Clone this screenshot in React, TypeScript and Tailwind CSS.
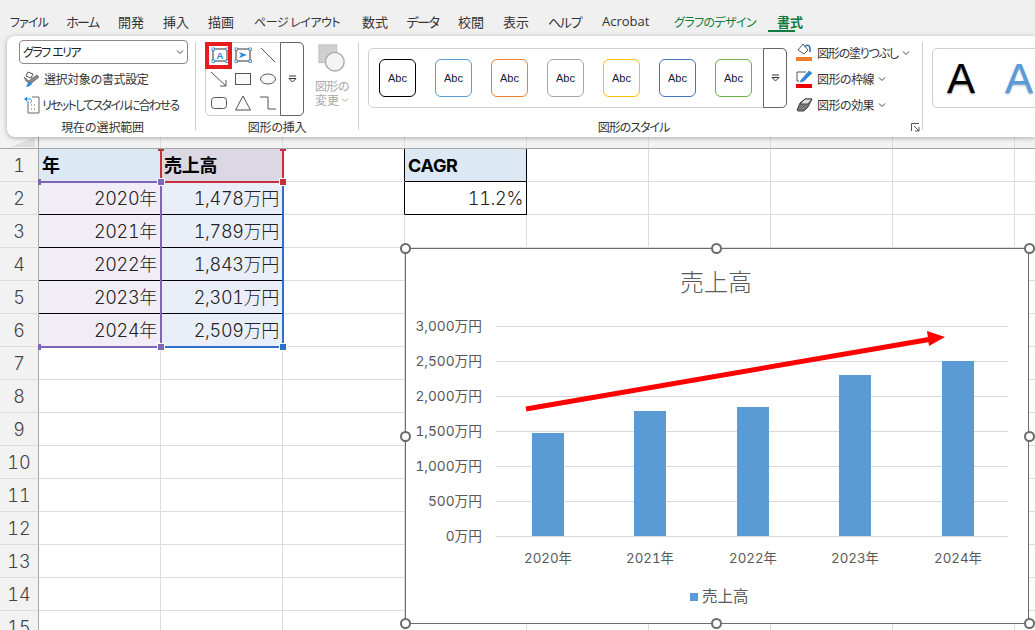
import type { ReactNode } from 'react'

const JP = "font-['Noto_Sans_CJK_JP','Noto_Sans',sans-serif]"
const CELL_FONT = "font-['Inter','Noto_Sans_CJK_JP',sans-serif] tabular-nums"

const TABS = [
  { label: 'ファイル', cls: "w-[56px] text-[12px] tracking-[-0.9px] [font-feature-settings:'palt']" },
  { label: 'ホーム', cls: 'w-[52px] tracking-[-2px]' },
  { label: '開発', cls: 'w-[45px]' },
  { label: '挿入', cls: 'w-[45px]' },
  { label: '描画', cls: 'w-[46px]' },
  { label: 'ページ レイアウト', cls: "w-[108px] text-[12px] tracking-[-0.5px] [font-feature-settings:'palt']" },
  { label: '数式', cls: 'w-[44px]' },
  { label: 'データ', cls: 'w-[52px] tracking-[-2px]' },
  { label: '校閲', cls: 'w-[45px]' },
  { label: '表示', cls: 'w-[45px]' },
  { label: 'ヘルプ', cls: 'w-[54px] tracking-[-2px]' },
  { label: 'Acrobat', cls: "w-[72px] font-['Open_Sans',sans-serif] text-[13px]" },
  { label: 'グラフのデザイン', cls: "w-[103px] text-[12px] tracking-[-0.6px] text-[#107c41] [font-feature-settings:'palt']" },
]

const ABC = [
  'border-black',
  'border-[#5b9bd5]',
  'border-[#ed7d31]',
  'border-[#a5a5a5]',
  'border-[#ffc000]',
  'border-[#4472c4]',
  'border-[#70ad47]',
]

const COLUMNS = ['A', 'B', 'C', 'D', 'E', 'F', 'G', 'H', 'I']
const ROWS = [1, 2, 3, 4, 5, 6, 7, 8, 9, 10, 11, 12, 13, 14, 15]

const SALES = [
  { year: '2020年', label: '1,478万円', x: 532, y: 433, h: 103 },
  { year: '2021年', label: '1,789万円', x: 634, y: 411, h: 125 },
  { year: '2022年', label: '1,843万円', x: 737, y: 407, h: 129 },
  { year: '2023年', label: '2,301万円', x: 839, y: 375, h: 161 },
  { year: '2024年', label: '2,509万円', x: 942, y: 361, h: 175 },
]

const Y_LABELS = ['3,000万円', '2,500万円', '2,000万円', '1,500万円', '1,000万円', '500万円', '0万円']

function Chevron({ className = 'text-[#444]' }: { className?: string }) {
  return (
    <svg width="8" height="6" viewBox="0 0 8 6" className={`shrink-0 ${className}`}>
      <path d="M1 1.5 L4 4.5 L7 1.5" fill="none" stroke="currentColor" strokeWidth="1" />
    </svg>
  )
}

function MoreButton({ className }: { className: string }) {
  return (
    <div className={`flex w-[24px] items-center justify-center border border-[#666] rounded-r-[5px] ${className}`}>
      <svg width="9" height="8" viewBox="0 0 9 8">
        <path d="M1 1 H8" stroke="#333" strokeWidth="1" />
        <path d="M1 3.5 L4.5 7 L8 3.5 Z" fill="none" stroke="#333" strokeWidth="1" />
      </svg>
    </div>
  )
}

function Sep({ className }: { className: string }) {
  return <div className={`h-[88px] w-px bg-[#d0d0d0] ${className}`} />
}

function GroupLabel({ children, className = '' }: { children: ReactNode; className?: string }) {
  return <div className={`h-[18px] text-center text-[12px] leading-[18px] text-[#333] ${className}`}>{children}</div>
}

function TextBoxIcon({ glyph }: { glyph: 'A' | 'v' }) {
  return (
    <svg width="18" height="16" viewBox="0 0 18 16">
      <rect x="2" y="2" width="14" height="12" fill="#fff" stroke="#333" strokeWidth="1" />
      {[[2, 2], [16, 2], [2, 14], [16, 14]].map(([cx, cy]) => (
        <rect key={`${cx}-${cy}`} x={cx - 1} y={cy - 1} width="2.5" height="2.5" fill="#fff" stroke="#1e88d8" strokeWidth="0.8" />
      ))}
      {glyph === 'A' ? (
        <text x="9" y="12" textAnchor="middle" fontSize="9.5" fontWeight="700" fill="#2b8ad8" fontFamily="Liberation Sans">A</text>
      ) : (
        <path d="M5 5 L13 8 L5 11 L7 8 Z" fill="#2b8ad8" />
      )}
    </svg>
  )
}

function ShapeIcon({ kind }: { kind: string }) {
  const s = { fill: 'none', stroke: '#555', strokeWidth: 1 }
  return (
    <svg width="18" height="18" viewBox="0 0 18 18">
      {kind === 'line' && <path d="M2 2 L16 16" {...s} />}
      {kind === 'arrow' && <path d="M1 2 L16 16 M16 10 V16 H10" {...s} />}
      {kind === 'rect' && <rect x="1.5" y="3.5" width="15" height="11" fill="#fafafa" stroke="#555" />}
      {kind === 'oval' && <ellipse cx="9" cy="9" rx="7.5" ry="5" fill="#fafafa" stroke="#555" />}
      {kind === 'round' && <rect x="1.5" y="3.5" width="15" height="11" rx="3" fill="#fafafa" stroke="#555" />}
      {kind === 'tri' && <path d="M9 2 L16.5 16 H1.5 Z" fill="#fafafa" stroke="#555" />}
      {kind === 'elbow' && <path d="M1 3 H9 V15 H17" {...s} />}
    </svg>
  )
}

function SelectionIcon() {
  return (
    <svg width="17" height="17" viewBox="0 0 17 17" className="shrink-0">
      <path d="M5 1 L10 3 L8 7 L3 5 Z" fill="#fff" stroke="#555" />
      <path d="M1 6 L6 10 L8 8 L14 4 L16 6 L10 11 L7 13 L3 10 Z" fill="#8a8a8a" stroke="#555" strokeWidth="0.6" />
      <path d="M5 12 C7 11 9 12 9 13 C7 15 5 16 3 16 C4 15 4 13 5 12 Z" fill="#2b8ad8" />
    </svg>
  )
}

function ResetIcon() {
  return (
    <svg width="17" height="18" viewBox="0 0 17 18" className="shrink-0">
      <path d="M5 5 V17 H16 V1 H9" fill="none" stroke="#666" />
      <path d="M8 9 H9 M11 9 H12 M8 13 H9 M11 13 H12" stroke="#666" />
      <path d="M1 3 L4 0.5 V5.5 Z" fill="#2b8ad8" />
      <path d="M3 3 H7 C9 3 9 7 7 7" fill="none" stroke="#2b8ad8" />
    </svg>
  )
}

function FillIcon() {
  return (
    <svg width="17" height="20" viewBox="0 0 17 20">
      <path d="M7 1 L12 7 L8 11 L2 7 Z" fill="#fff" stroke="#555" />
      <path d="M9 4 C11 1 14 2 14 6 L14 9" fill="none" stroke="#2b6fb0" strokeWidth="1.5" />
      <rect x="0" y="14" width="16" height="4" fill="#ed7d31" />
    </svg>
  )
}

function OutlineIcon() {
  return (
    <svg width="17" height="20" viewBox="0 0 17 20">
      <path d="M1 12 V3 H10 M1 12 H3" fill="none" stroke="#555" />
      <path d="M5 11 L13 2 L16 4 L8 12 L4 13 Z" fill="#2b8ad8" stroke="#1c6fb5" strokeWidth="0.5" />
      <rect x="0" y="15" width="16" height="4" fill="#f00000" />
    </svg>
  )
}

function EffectIcon() {
  return (
    <svg width="17" height="14" viewBox="0 0 17 14">
      <path d="M1 12 L4 5 L9 1 H16 L12 9 L8 13 H2 Z" fill="#777" stroke="#444" />
      <path d="M4 6 L9 1 H16 L12 6 Z" fill="#ddd" stroke="#444" />
    </svg>
  )
}

function ChangeShapeIcon() {
  return (
    <svg width="28" height="28" viewBox="0 0 30 30">
      <rect x="1" y="1" width="19" height="19" fill="#d0d0d0" stroke="#bbb" />
      <circle cx="18" cy="19" r="10" fill="#f4f4f4" stroke="#aaa" strokeWidth="1.5" />
    </svg>
  )
}

function Ribbon() {
  const shapes = ['tb', 'tv', 'line', 'arrow', 'rect', 'oval', 'round', 'tri', 'elbow']
  const commands = [
    { icon: <FillIcon />, label: '図形の塗りつぶし', cls: "tracking-[-1.2px] [font-feature-settings:'palt']" },
    { icon: <OutlineIcon />, label: '図形の枠線', cls: 'tracking-[-0.6px]' },
    { icon: <EffectIcon />, label: '図形の効果', cls: 'tracking-[-0.6px]' },
  ]
  return (
    <div className={`relative z-10 ml-[7px] flex h-[101px] rounded-l-[8px] bg-white shadow-[0_1px_5px_rgba(0,0,0,0.3)] ${JP}`}>
      {/* 現在の選択範囲 */}
      <div className="flex w-[188px] shrink-0 flex-col">
        <div className="flex h-[82px] flex-col pl-[12px] pt-[4px]">
          <div className="flex h-[24px] w-[169px] items-center justify-between rounded-[4px] border border-[#8a8a8a] pl-[3px] pr-[3px] text-[12px] text-[#222]">
            <span className="whitespace-pre tracking-[-1.5px] [font-feature-settings:'palt']">グラフ  エリア</span>
            <Chevron />
          </div>
          <div className="mt-[4px] flex h-[22px] items-center gap-[4px] pl-[4px] text-[12px] tracking-[-0.4px] text-[#333]">
            <SelectionIcon />
            <span className="whitespace-nowrap">選択対象の書式設定</span>
          </div>
          <div className="mt-[4px] flex h-[22px] items-center gap-[2px] pl-[4px] text-[12px] tracking-[-1.7px] text-[#333]">
            <ResetIcon />
            <span className="whitespace-nowrap [font-feature-settings:'palt']">リセットしてスタイルに合わせる</span>
          </div>
        </div>
        <GroupLabel className="pl-[3px] tracking-[-0.2px]">現在の選択範囲</GroupLabel>
      </div>
      <Sep className="mt-[6px] shrink-0" />

      {/* 図形の挿入 */}
      <div className="flex w-[162px] shrink-0 flex-col">
        <div className="flex h-[82px] pl-[9px] pt-[6px]">
          <div className="relative flex h-[74px] w-[99px] rounded-[5px] border border-[#cfcfcf]">
            <div className="grid flex-1 grid-cols-3 grid-rows-3 pl-[1px]">
              {shapes.map((kind) => (
                <div key={kind} className="flex items-center justify-center">
                  {kind === 'tb' ? (
                    <span className="ml-[2px] flex">
                      <TextBoxIcon glyph="A" />
                    </span>
                  ) : kind === 'tv' ? (
                    <TextBoxIcon glyph="v" />
                  ) : (
                    <ShapeIcon kind={kind} />
                  )}
                </div>
              ))}
            </div>
            <MoreButton className="-my-px -mr-px" />
            <div className="absolute -left-px -top-px h-[27px] w-[27px] border-[4px] border-[#e81c1c]" />
          </div>
          <div className="ml-[9px] flex w-[38px] flex-col items-center pt-[2px] text-[12px] leading-[14px] text-[#a9a9a9]">
            <ChangeShapeIcon />
            <div className="mt-[7px] whitespace-nowrap tracking-[-0.6px]">図形の</div>
            <div className="flex items-center gap-[2px] whitespace-nowrap">
              変更
              <Chevron className="text-[#a9a9a9]" />
            </div>
          </div>
        </div>
        <GroupLabel className="tracking-[-0.3px]">図形の挿入</GroupLabel>
      </div>
      <Sep className="mt-[6px] shrink-0" />

      {/* 図形のスタイル */}
      <div className="relative flex w-[563px] shrink-0 flex-col">
        <div className="flex h-[82px] pl-[9px] pt-[12px]">
          <div className="flex h-[60px] w-[419px] rounded-[5px] border border-[#cfcfcf]">
            <div className="flex flex-1 items-center gap-[19px] pl-[10px]">
              {ABC.map((color, i) => (
                <div
                  key={i}
                  className={`flex h-[38px] w-[37px] items-center justify-center rounded-[6px] border ${color} font-['Liberation_Sans',sans-serif] text-[11px] text-[#14203a]`}
                >
                  Abc
                </div>
              ))}
            </div>
            <MoreButton className="-my-px -mr-px" />
          </div>
          <div className="-mt-[8px] ml-[9px] flex flex-col text-[12px] text-[#333]">
            {commands.map((c) => (
              <div key={c.label} className="flex h-[26px] items-center gap-[4px] whitespace-nowrap">
                <span className="flex w-[17px] justify-center">{c.icon}</span>
                <span className={c.cls}>{c.label}</span>
                <Chevron />
              </div>
            ))}
          </div>
        </div>
        <div className="pr-[14px]">
          <GroupLabel className="tracking-[-1px] [font-feature-settings:'palt']">図形のスタイル</GroupLabel>
        </div>
        <svg width="9" height="9" viewBox="0 0 9 9" className="absolute left-[552px] top-[87px]">
          <path d="M0.5 8 V0.5 H8 M3 3 L8 8 M8 4 V8 H4" fill="none" stroke="#555" />
        </svg>
      </div>
      <Sep className="mt-[6px] shrink-0" />

      {/* ワードアート */}
      <div className="min-w-0 flex-1 overflow-hidden pl-[9px] pt-[12px]">
        <div className="flex h-[60px] w-[200px] items-center gap-[30px] rounded-[5px] border border-[#cfcfcf] pl-[14px] font-['Liberation_Sans',sans-serif] text-[42px]">
          <span className="text-black [text-shadow:0_1px_2px_rgba(0,0,0,0.5)]">A</span>
          <span className="text-[#5b9bd5] [text-shadow:0_1px_2px_rgba(60,100,150,0.6)]">A</span>
        </div>
      </div>
    </div>
  )
}

function TabBar() {
  return (
    <div className={`flex h-[36px] items-center pl-[10px] pt-[8px] text-[13px] text-[#333] ${JP}`}>
      {TABS.map((t) => (
        <div key={t.label} className={`${t.cls} shrink-0 whitespace-pre`}>
          {t.label}
        </div>
      ))}
      <div className="relative w-[27px] shrink-0 whitespace-nowrap font-bold text-[#107c41]">
        書式
        <div className="absolute -left-[9px] top-[18px] h-[2px] w-[27px] bg-[#107c41]" />
      </div>
    </div>
  )
}

function cellClass(col: number, row: number) {
  const inTable = row >= 2 && row <= 6
  if (col === 0 && row === 1) return 'bg-[#dce9f5] font-bold text-black justify-start border-b-[#dcdcdc] border-r-[#dcdcdc]'
  if (col === 1 && row === 1) return 'bg-[#dbd7e3] font-bold text-black justify-start border-b-[#dcdcdc] border-r-[#dcdcdc]'
  if (col === 0 && inTable) return 'bg-[#f0edf7] justify-end border-b-black border-r-[#dcdcdc]'
  if (col === 1 && inTable) return 'bg-[#e9eef8] justify-end border-b-black border-r-[#dcdcdc]'
  if (col === 2 && row <= 2) return 'justify-end border-b-[#dcdcdc] border-r-black'
  if (col === 3 && row === 1) return 'bg-[#dce9f5] font-bold text-black justify-start border-b-black border-r-black'
  if (col === 3 && row === 2) return 'justify-end border-b-black border-r-black'
  return 'justify-end border-b-[#dcdcdc] border-r-[#dcdcdc]'
}

function cellText(col: number, row: number) {
  if (row === 1) return ['年', '売上高', '', 'CAGR'][col] ?? ''
  if (row >= 2 && row <= 6) {
    if (col === 0) return SALES[row - 2].year
    if (col === 1) return SALES[row - 2].label
    if (col === 3 && row === 2) return '11.2%'
  }
  return ''
}

function Sheet() {
  return (
    <div className={`-mt-[17px] ${CELL_FONT} font-light`}>
      <div className="flex h-[29px] border-b border-[#a6a6a6] bg-[#f2f2f2]">
        <div className="relative w-[39px] shrink-0 border-r border-[#a6a6a6]">
          <svg width="24" height="10" viewBox="0 0 24 10" className="absolute bottom-[1px] right-[3px]">
            <path d="M0 10 L24 0 V10 Z" fill="#dedede" />
          </svg>
        </div>
        {COLUMNS.map((c) => (
          <div key={c} className="flex w-[122px] shrink-0 items-center justify-center border-r border-[#dcdcdc] pb-[11px] text-[18px] text-[#444]">
            {c}
          </div>
        ))}
      </div>
      {ROWS.map((row) => (
        <div key={row} className="flex h-[33px]">
          <div className="flex w-[39px] shrink-0 items-center justify-center border-b border-r border-b-[#dcdcdc] border-r-[#a6a6a6] bg-[#f2f2f2] text-[18px] text-[#444]">
            {row}
          </div>
          {COLUMNS.map((_, col) => (
            <div
              key={col}
              className={`flex w-[122px] shrink-0 items-center border-b border-r px-[3px] text-[18px] tracking-[-0.3px] text-[#222] ${cellClass(col, row)}`}
            >
              {cellText(col, row)}
            </div>
          ))}
        </div>
      ))}
    </div>
  )
}

function RangeHighlights() {
  return (
    <>
      {/* 系列名・項目・値の範囲 */}
      <div className="absolute left-[160px] top-[149px] h-[34px] w-[124px] border-[2px] border-t-0 border-[#c5313d]" />
      <div className="absolute left-[40px] top-[181px] h-[2px] w-[120px] bg-[#8064b8]" />
      <div className="absolute left-[160px] top-[183px] h-[164px] w-[2px] bg-[#8064b8]" />
      <div className="absolute left-[40px] top-[346px] h-[2px] w-[120px] bg-[#8064b8]" />
      <div className="absolute left-[163px] top-[346px] h-[2px] w-[120px] bg-[#2f6fc9]" />
      <div className="absolute left-[282px] top-[185px] h-[161px] w-[2px] bg-[#2f6fc9]" />
      <div className="absolute left-[158px] top-[179px] h-[6px] w-[6px] bg-[#8064b8] outline outline-white" />
      <div className="absolute left-[158px] top-[344px] h-[6px] w-[6px] bg-[#8064b8] outline outline-white" />
      <div className="absolute left-[38px] top-[179px] h-[6px] w-[3px] bg-[#8064b8]" />
      <div className="absolute left-[38px] top-[344px] h-[6px] w-[3px] bg-[#8064b8]" />
      <div className="absolute left-[280px] top-[179px] h-[6px] w-[6px] bg-[#c5313d] outline outline-white" />
      <div className="absolute left-[280px] top-[344px] h-[6px] w-[6px] bg-[#2f6fc9] outline outline-white" />
      <div className="absolute left-[158px] top-[149px] h-[2px] w-[6px] bg-[#c5313d]" />
      <div className="absolute left-[280px] top-[149px] h-[2px] w-[6px] bg-[#c5313d]" />
    </>
  )
}

function SalesChart() {
  const handles = [
    'left-[-6px] top-[-6px]',
    'left-[305px] top-[-6px]',
    'left-[618px] top-[-6px]',
    'left-[-6px] top-[182px]',
    'left-[618px] top-[182px]',
    'left-[-6px] top-[369px]',
    'left-[305px] top-[369px]',
    'left-[618px] top-[369px]',
  ]
  return (
    <div className="absolute left-[405px] top-[248px] h-[376px] w-[624px] border-[1.5px] border-[#6b6b6b] bg-white">
      <svg width="622" height="374" viewBox="406 249 622 374" className="block font-['Inter','Noto_Sans_CJK_JP',sans-serif] tabular-nums">
        <text x="716" y="291" textAnchor="middle" fontSize="24" fontWeight="300" fill="#595959">売上高</text>
        {Y_LABELS.map((label, i) => (
          <g key={label}>
            <line x1="496" x2="1008" y1={326.5 + i * 35} y2={326.5 + i * 35} stroke="#d9d9d9" />
            <text x="482" y={331 + i * 35} textAnchor="end" fontSize="13.7" fill="#595959">{label}</text>
          </g>
        ))}
        {SALES.map((s) => (
          <g key={s.year}>
            <rect x={s.x} y={s.y} width="32" height={s.h} fill="#5b9bd5" />
            <text x={s.x + 16} y="563" textAnchor="middle" fontSize="13.3" fill="#595959">{s.year}</text>
          </g>
        ))}
        <rect x="690" y="593" width="8" height="8" fill="#5b9bd5" />
        <text x="702" y="602" fontSize="15.5" fill="#595959">売上高</text>
        <line x1="526" y1="409" x2="932" y2="339" stroke="#ff0000" strokeWidth="5" />
        <path d="M945 337 L929 346 L927 331 Z" fill="#ff0000" />
      </svg>
      {handles.map((h) => (
        <div key={h} className={`absolute h-[11px] w-[11px] rounded-full border-[2px] border-[#6b6b6b] bg-white ${h}`} />
      ))}
    </div>
  )
}

export default function App() {
  return (
    <div className="relative h-[630px] w-[1035px] overflow-hidden bg-[#f0f0f0]">
      <TabBar />
      <Ribbon />
      <div className="bg-white">
        <Sheet />
      </div>
      <RangeHighlights />
      <SalesChart />
    </div>
  )
}
